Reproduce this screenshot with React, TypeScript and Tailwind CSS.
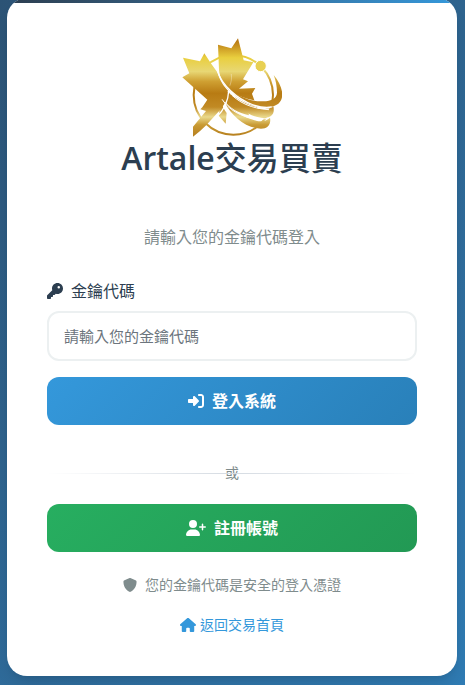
import React from "react";
import {
  FaHouse,
  FaKey,
  FaRightToBracket,
  FaShield,
  FaUserPlus,
} from "react-icons/fa6";

const Logo = () => {
  return (
    <svg
      viewBox="36 24 300 300"
      className="size-[100px]"
      role="img"
      aria-label="Artale"
    >
      <defs>
        <linearGradient
          id="gold"
          gradientUnits="userSpaceOnUse"
          x1="0"
          y1="24"
          x2="0"
          y2="320"
        >
          <stop offset="0" stopColor="#b06f12" />
          <stop offset="0.07" stopColor="#c58c1c" />
          <stop offset="0.2" stopColor="#e9cf3f" />
          <stop offset="0.34" stopColor="#e8d774" />
          <stop offset="0.44" stopColor="#cfa032" />
          <stop offset="0.56" stopColor="#b87b13" />
          <stop offset="0.7" stopColor="#c18a24" />
          <stop offset="0.8" stopColor="#ead98c" />
          <stop offset="0.88" stopColor="#c99b34" />
          <stop offset="1" stopColor="#b57d1c" />
        </linearGradient>
      </defs>
      <circle
        cx="190"
        cy="195"
        r="119"
        fill="none"
        stroke="url(#gold)"
        strokeWidth="6"
      />
      <g fill="url(#gold)">
        {/* left leaf with its stem */}
        <path d="M39 83 L90 94 L103 70 L122 99 L143 128 C150 153 162 170 177 185 C171 212 158 233 142 249 C119 275 98 299 69 320 L69 290 L108 243 L91 238 L97 232 L112 209 L37 142 L58 130 Z" />
        {/* right leaf */}
        <path d="M144 44 L184 55 L204 25 L221 91 L250 97 L219 148 L234 154 L207 176 L256 174 L246 191 L253 211 C220 205 193 192 177 180 C160 163 149 143 147 121 Z" />
        <path d="M174 184 C195 207 225 222 261 232 L266 244 L233 240 L237 256 C205 249 177 234 160 207 Z" />
        <path d="M154 207 C154 225 162 238 170 249 L167 281 L146 257 Z" />
        {/* sweeping tails */}
        <path d="M311 135 C332 160 343 190 333 211 C323 232 293 234 270 231 C237 226 205 207 182 182 C220 205 249 215 276 214 C303 215 320 205 321 188 C321 169 317 150 311 135 Z" />
        <path d="M180 194 C210 227 249 239 285 237 C300 237 307 234 310 229 C316 253 302 264 282 264 C235 262 200 229 180 194 Z" />
        <path d="M163 215 C186 243 222 262 258 272 C275 276 290 273 300 263 C304 282 293 296 273 296 C226 294 185 258 163 215 Z" />
      </g>
      <g fill="none" stroke="#fff" strokeLinecap="round">
        <path
          d="M143 125 C156 164 198 205 250 225 C272 232 290 234 304 231"
          strokeWidth="4"
        />
        <path
          d="M174 184 C205 219 246 236 296 239 M157 209 C176 239 211 261 264 268 C277 269 286 266 292 264"
          strokeWidth="3"
        />
        <path d="M176 182 C175 215 158 244 138 263" strokeWidth="4" />
        <path d="M184 133 C186 146 183 157 180 166" strokeWidth="1" />
      </g>
      <circle
        cx="272"
        cy="108"
        r="17"
        fill="#e8d052"
        stroke="#fff"
        strokeWidth="3"
      />
    </svg>
  );
};

const Divider = () => {
  return (
    <div className="mt-9 mb-[19px] grid h-6 items-center text-center text-sm text-[#7f8c8d]">
      <span className="col-start-1 row-start-1">或</span>
      <span className="col-start-1 row-start-1 h-px bg-linear-to-r from-transparent via-[#d5dbe2] to-transparent" />
    </div>
  );
};

const App = () => {
  return (
    <div className="min-h-screen overflow-hidden bg-linear-135 from-[#2c5375] to-[#2f7bb3] pl-[7px] pr-2 pb-2 font-['Open_Sans','Noto_Sans_CJK_TC',sans-serif] font-normal">
      <main className="mx-auto -mt-0.5 max-w-[450px] overflow-hidden rounded-[20px] bg-white shadow-lg">
        <div className="h-[5px] bg-linear-to-r from-[#2c3e50] to-[#3498db]" />
        <div className="px-10 pt-[35px] pb-[39px]">
          <header className="flex flex-col items-center">
            <Logo />
            <h1 className="text-[32px] leading-10 font-medium text-[#2c3e50]">
              <span className="font-semibold">Artale</span>交易買賣
            </h1>
            <p className="mt-[47px] text-base text-[#7f8c8d]">
              請輸入您的金鑰代碼登入
            </p>
          </header>

          <form className="mt-[30px]" onSubmit={(e) => e.preventDefault()}>
            <label
              htmlFor="key-code"
              className="flex items-center gap-2 text-base text-[#2c3e50]"
            >
              <FaKey />
              金鑰代碼
            </label>
            <input
              id="key-code"
              type="text"
              placeholder="請輸入您的金鑰代碼"
              className="mt-2 h-[50px] w-full rounded-xl border-2 border-[#ecf0f1] px-[15px] text-[15px] placeholder:text-[#6c757d] focus:outline-none"
            />
            <button
              type="submit"
              className="mt-4 flex h-12 w-full items-center justify-center gap-2 rounded-xl bg-linear-135 from-[#3498db] to-[#2980b9] text-base font-bold text-white"
            >
              <FaRightToBracket />
              登入系統
            </button>
          </form>

          <Divider />

          <button
            type="button"
            className="flex h-12 w-full items-center justify-center gap-2 rounded-xl bg-linear-135 from-[#27ae60] to-[#229954] text-base font-bold text-white"
          >
            <FaUserPlus className="h-4 w-5" />
            註冊帳號
          </button>

          <p className="mt-[21px] flex items-center justify-center gap-2 text-sm leading-6 text-[#7f8c8d]">
            <FaShield />
            您的金鑰代碼是安全的登入憑證
          </p>
          <div className="mt-4 flex justify-center">
            <a
              href="#"
              className="flex items-center gap-1 text-sm leading-6 text-[#3498db]"
            >
              <FaHouse className="size-4" />
              返回交易首頁
            </a>
          </div>
        </div>
      </main>
    </div>
  );
};

export default App;
